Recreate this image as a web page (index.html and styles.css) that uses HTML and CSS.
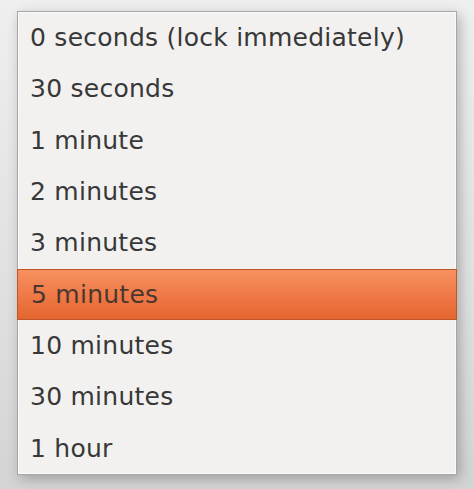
FILE: index.html
```html
<!DOCTYPE html>
<html>
<head>
<meta charset="utf-8">
<link rel="stylesheet" href="styles.css">
</head>
<body>
<div class="stage">
  <ul class="menu">
    <li class="item">0 seconds (lock immediately)</li>
    <li class="item">30 seconds</li>
    <li class="item">1 minute</li>
    <li class="item">2 minutes</li>
    <li class="item">3 minutes</li>
    <li class="item selected">5 minutes</li>
    <li class="item">10 minutes</li>
    <li class="item">30 minutes</li>
    <li class="item">1 hour</li>
  </ul>
</div>
</body>
</html>
```
FILE: styles.css
```css
html, body {
  margin: 0;
  padding: 0;
}
body {
  width: 474px;
  height: 489px;
  overflow: hidden;
  background: linear-gradient(to bottom, #efefef 0%, #e0e0e0 60%, #d4d4d4 100%);
  font-family: "DejaVu Sans", "Noto Sans", sans-serif;
}
.stage {
  padding: 11px 17px 0 17px;
}
.menu {
  list-style: none;
  margin: 0;
  padding: 0;
  width: 438px;
  height: 462px;
  border: 1px solid #a6a6a6;
  background: #f2f1f0;
  box-shadow: inset 0 0 0 1px #fbfbfa, 3px 4px 12px rgba(0, 0, 0, 0.25);
  display: grid;
  grid-template-rows: repeat(9, 1fr);
}
.item {
  display: flex;
  align-items: center;
  padding-left: 12px;
  padding-bottom: 0;
  font-size: 25px;
  color: #383838;
  letter-spacing: 0.25px;
}
.selected {
  margin: 0 -1px;
  padding-left: 13px;
  border: 1px solid #bd572b;
  background: linear-gradient(to bottom, #f7905f 0%, #ef7a48 50%, #e4652f 100%);
  color: #4a3830;
}
```
